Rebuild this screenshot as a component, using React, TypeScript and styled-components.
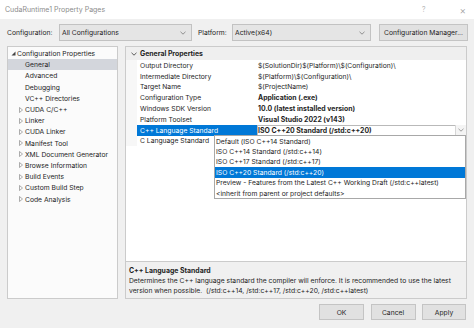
import React from 'react';
import styled, {createGlobalStyle} from 'styled-components';

const GlobalStyle = createGlobalStyle`
  html, body {
    margin: 0;
    padding: 0;
    background: #f0f0f0;
  }
  body {
    font-family: Inter, 'Open Sans', 'Liberation Sans', sans-serif;
    font-size: 6.75px;
    color: #1e1e1e;
  }
`;

type TreeNode = {
  label: string;
  level: number;
  arrow?: 'open' | 'closed';
  selected?: boolean;
};

const treeNodes: TreeNode[] = [
  {label: 'Configuration Properties', level: 0, arrow: 'open'},
  {label: 'General', level: 1, selected: true},
  {label: 'Advanced', level: 1},
  {label: 'Debugging', level: 1},
  {label: 'VC++ Directories', level: 1},
  {label: 'CUDA C/C++', level: 1, arrow: 'closed'},
  {label: 'Linker', level: 1, arrow: 'closed'},
  {label: 'CUDA Linker', level: 1, arrow: 'closed'},
  {label: 'Manifest Tool', level: 1, arrow: 'closed'},
  {label: 'XML Document Generator', level: 1, arrow: 'closed'},
  {label: 'Browse Information', level: 1, arrow: 'closed'},
  {label: 'Build Events', level: 1, arrow: 'closed'},
  {label: 'Custom Build Step', level: 1, arrow: 'closed'},
  {label: 'Code Analysis', level: 1, arrow: 'closed'},
];

type Prop = {name: string; value: string; bold?: boolean; active?: boolean};

const properties: Prop[] = [
  {name: 'Output Directory', value: '$(SolutionDir)$(Platform)\\$(Configuration)\\'},
  {name: 'Intermediate Directory', value: '$(Platform)\\$(Configuration)\\'},
  {name: 'Target Name', value: '$(ProjectName)'},
  {name: 'Configuration Type', value: 'Application (.exe)', bold: true},
  {name: 'Windows SDK Version', value: '10.0 (latest installed version)', bold: true},
  {name: 'Platform Toolset', value: 'Visual Studio 2022 (v143)', bold: true},
  {
    name: 'C++ Language Standard',
    value: 'ISO C++20 Standard (/std:c++20)',
    bold: true,
    active: true,
  },
  {name: 'C Language Standard', value: ''},
];

const options = [
  'Default (ISO C++14 Standard)',
  'ISO C++14 Standard (/std:c++14)',
  'ISO C++17 Standard (/std:c++17)',
  'ISO C++20 Standard (/std:c++20)',
  'Preview - Features from the Latest C++ Working Draft (/std:c++latest)',
  '<inherit from parent or project defaults>',
];

const Chevron = ({color = '#777'}: {color?: string}) => (
  <svg width="6" height="4" viewBox="0 0 6 4">
    <path d="M0.5 0.8 L3 3.2 L5.5 0.8" fill="none" stroke={color} strokeWidth="0.8" />
  </svg>
);

const TreeArrow = ({kind}: {kind: 'open' | 'closed'}) =>
  kind === 'open' ? (
    <svg width="5" height="5" viewBox="0 0 5 5">
      <path d="M4.5 0.5 L4.5 4.5 L0.5 4.5 Z" fill="#444" />
    </svg>
  ) : (
    <svg width="4" height="6" viewBox="0 0 4 6">
      <path d="M0.5 0.5 L3.5 3 L0.5 5.5 Z" fill="none" stroke="#8a8a8a" strokeWidth="0.7" />
    </svg>
  );

export default function App() {
  return (
    <>
      <GlobalStyle />
      <Window>
        <TitleBar>
          <Title>CudaRuntime1 Property Pages</Title>
          <TitleButtons>
            <TitleGlyph>?</TitleGlyph>
            <TitleGlyph $wide>×</TitleGlyph>
          </TitleButtons>
        </TitleBar>

        <ConfigRow>
          <FieldLabel $width={52}>Configuration:</FieldLabel>
          <Combo $width={133}>
            <span>All Configurations</span>
            <Chevron />
          </Combo>
          <FieldLabel $width={34} $gap={6}>
            Platform:
          </FieldLabel>
          <Combo $width={139}>
            <span>Active(x64)</span>
            <Chevron />
          </Combo>
          <PushButton $width={89} $gap={8}>
            Configuration Manager...
          </PushButton>
        </ConfigRow>

        <Main>
          <Tree>
            {treeNodes.map(n => (
              <TreeRow key={n.label} $level={n.level} $selected={n.selected}>
                <ArrowSlot>{n.arrow && <TreeArrow kind={n.arrow} />}</ArrowSlot>
                <span>{n.label}</span>
              </TreeRow>
            ))}
          </Tree>

          <RightColumn>
            <Grid>
              <CategoryRow>
                <Gutter $header>
                  <Chevron color="#333" />
                </Gutter>
                <CategoryTitle>General Properties</CategoryTitle>
              </CategoryRow>
              {properties.map(p => (
                <PropRow key={p.name}>
                  <Gutter />
                  <PropName $active={p.active}>{p.name}</PropName>
                  <PropValue $bold={p.bold} $active={p.active}>
                    <span>{p.value}</span>
                    {p.active && (
                      <DropButton>
                        <Chevron color="#888" />
                      </DropButton>
                    )}
                  </PropValue>
                </PropRow>
              ))}

              <DropList>
                {options.map(o => (
                  <DropItem key={o} $selected={o.startsWith('ISO C++20')}>
                    {o}
                  </DropItem>
                ))}
              </DropList>
            </Grid>

            <Description>
              <DescTitle>C++ Language Standard</DescTitle>
              <DescText>
                Determines the C++ language standard the compiler will enforce. It is
                recommended to use the latest
                <br />
                version when possible.&nbsp; (/std:c++14, /std:c++17, /std:c++20,
                /std:c++latest)
              </DescText>
            </Description>
          </RightColumn>
        </Main>

        <ButtonRow>
          <PushButton $width={45} $short>
            OK
          </PushButton>
          <PushButton $width={45} $short>
            Cancel
          </PushButton>
          <PushButton $width={44} $short>
            Apply
          </PushButton>
        </ButtonRow>
      </Window>
    </>
  );
}

const Window = styled.div`
  width: 474px;
  height: 328px;
  display: flex;
  flex-direction: column;
  overflow: hidden;
  background: #f0f0f0;
`;

const TitleBar = styled.div`
  height: 19px;
  flex: none;
  display: flex;
  align-items: center;
  padding: 0 8px 0 5px;
  background: #ffffff;
  color: #8c8c8c;
`;

const Title = styled.div`
  font-size: 7px;
`;

const TitleButtons = styled.div`
  margin-left: auto;
  display: flex;
  align-items: center;
  gap: 34px;
  color: #a0a0a0;
`;

const TitleGlyph = styled.span<{$wide?: boolean}>`
  font-size: ${p => (p.$wide ? '10px' : '7px')};
  font-weight: 300;
`;

const ConfigRow = styled.div`
  height: 27px;
  flex: none;
  display: flex;
  align-items: center;
  padding: 0 7px;
`;

const FieldLabel = styled.div<{$width: number; $gap?: number}>`
  width: ${p => p.$width}px;
  margin-left: ${p => p.$gap ?? 0}px;
  flex: none;
`;

const Combo = styled.div<{$width: number}>`
  width: ${p => p.$width}px;
  height: 17px;
  box-sizing: border-box;
  flex: none;
  display: flex;
  align-items: center;
  justify-content: space-between;
  padding: 0 5px 0 2px;
  background: #e5e5e5;
  border: 1px solid #c2c2c2;
`;

const PushButton = styled.div<{$width: number; $gap?: number; $short?: boolean}>`
  width: ${p => p.$width}px;
  height: ${p => (p.$short ? 16 : 17)}px;
  margin-left: ${p => p.$gap ?? 0}px;
  box-sizing: border-box;
  flex: none;
  display: flex;
  align-items: center;
  justify-content: center;
  background: #e1e1e1;
  border: 1px solid #c4c4c4;
  white-space: nowrap;
`;

const Main = styled.div`
  height: 253px;
  flex: none;
  display: flex;
  gap: 7px;
  padding: 0 7px;
`;

const Tree = styled.div`
  width: 111px;
  flex: none;
  box-sizing: border-box;
  border: 1px solid #cbcbcb;
  background: #fbfbfb;
  padding-top: 1px;
`;

const TreeRow = styled.div<{$level: number; $selected?: boolean}>`
  height: 11.2px;
  display: flex;
  align-items: center;
  padding-left: ${p => 1 + p.$level * 8}px;
  background: ${p => (p.$selected ? '#d3d6dc' : 'transparent')};
  white-space: nowrap;
`;

const ArrowSlot = styled.span`
  width: 8px;
  flex: none;
  display: flex;
  align-items: center;
  padding-left: 2px;
  box-sizing: border-box;
`;

const RightColumn = styled.div`
  width: 342px;
  flex: none;
  display: flex;
  flex-direction: column;
`;

const Grid = styled.div`
  flex: 1;
  position: relative;
  box-sizing: border-box;
  border: 1px solid #cbcbcb;
  background: #ffffff;
`;

const CategoryRow = styled.div`
  height: 13px;
  display: flex;
  align-items: center;
  background: #efefef;
`;

const Gutter = styled.div<{$header?: boolean}>`
  width: 11px;
  height: 100%;
  flex: none;
  display: flex;
  align-items: center;
  justify-content: flex-end;
  background: ${p => (p.$header ? 'transparent' : '#f7f7f7')};
`;

const CategoryTitle = styled.div`
  padding-left: 3px;
  font-weight: 700;
  font-size: 6.9px;
`;

const PropRow = styled.div`
  height: 10.8px;
  display: flex;
  align-items: stretch;
`;

const PropName = styled.div<{$active?: boolean}>`
  width: 120px;
  flex: none;
  display: flex;
  align-items: center;
  padding-left: 3px;
  box-sizing: border-box;
  white-space: nowrap;
  background: ${p => (p.$active ? '#0078d7' : 'transparent')};
  color: ${p => (p.$active ? '#ffffff' : '#1e1e1e')};
`;

const PropValue = styled.div<{$bold?: boolean; $active?: boolean}>`
  flex: 1;
  display: flex;
  align-items: center;
  justify-content: space-between;
  padding-left: 1px;
  white-space: nowrap;
  font-weight: ${p => (p.$bold ? 700 : 400)};
  font-size: ${p => (p.$bold ? 6.9 : 6.75)}px;
  box-shadow: ${p => (p.$active ? 'inset 0 0 0 1px #b9b9b9' : 'none')};
`;

const DropButton = styled.div`
  width: 10px;
  height: 100%;
  display: flex;
  align-items: center;
  justify-content: center;
  border-left: 1px solid #d6d6d6;
  background: #f4f4f4;
`;

const DropList = styled.div`
  position: absolute;
  left: 88px;
  top: 88px;
  width: 252px;
  box-sizing: border-box;
  background: #ffffff;
  border: 1px solid #a8a8a8;
`;

const DropItem = styled.div<{$selected?: boolean}>`
  height: 10.4px;
  display: flex;
  align-items: center;
  padding-left: 1px;
  white-space: nowrap;
  background: ${p => (p.$selected ? '#0078d7' : 'transparent')};
  color: ${p => (p.$selected ? '#ffffff' : '#1e1e1e')};
`;

const Description = styled.div`
  height: 37px;
  flex: none;
  box-sizing: border-box;
  border: 1px solid #cbcbcb;
  border-top: none;
  background: #f0f0f0;
  padding: 4px 3px 0;
`;

const DescTitle = styled.div`
  font-weight: 700;
  font-size: 6.9px;
  line-height: 10px;
`;

const DescText = styled.div`
  line-height: 10px;
  white-space: nowrap;
`;

const ButtonRow = styled.div`
  flex: 1;
  display: flex;
  justify-content: flex-end;
  align-items: flex-start;
  gap: 6.5px;
  padding: 5px 8px 0 0;
`;
